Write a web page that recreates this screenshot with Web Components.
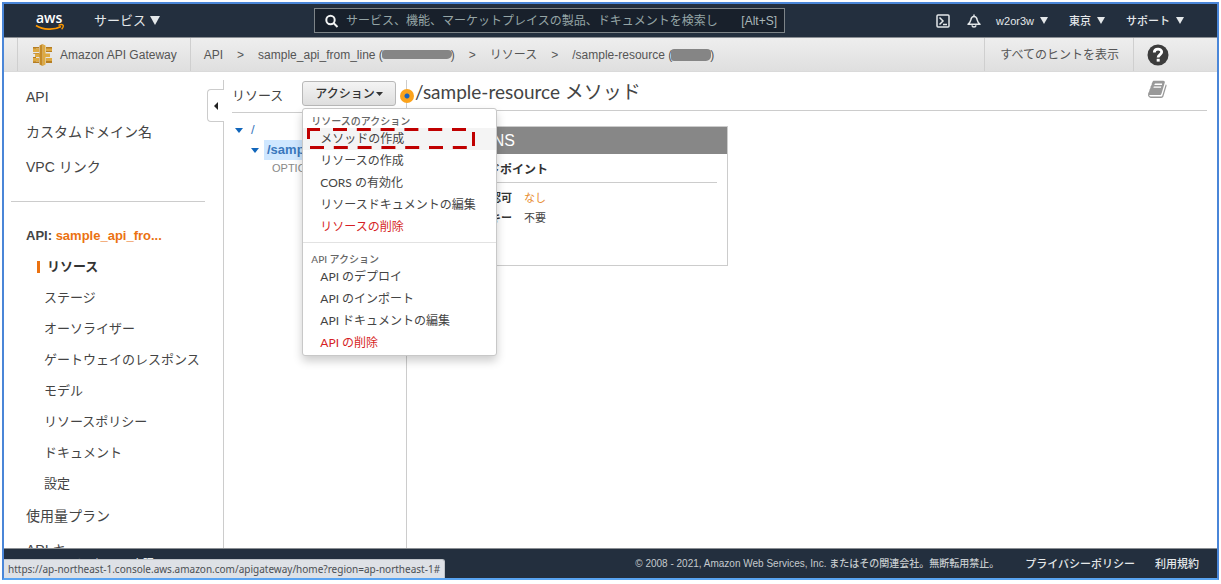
<!DOCTYPE html>
<html lang="ja">
<head>
<meta charset="utf-8">
<title>API Gateway</title>
<style>
html, body { margin: 0; height: 100%; }
body { background: #fff; color: #444; font: 12px/20px "Liberation Sans", "Noto Sans CJK JP", sans-serif; overflow: hidden; }
</style>
</head>
<body>
<console-shell>
  <top-nav slot="top"></top-nav>
  <crumb-bar slot="top"></crumb-bar>
  <side-nav></side-nav>
  <resource-tree><action-menu></action-menu></resource-tree>
  <method-pane><method-card></method-card></method-pane>
  <page-footer slot="bottom"></page-footer>
  <link-status slot="bottom">https://ap-northeast-1.console.aws.amazon.com/apigateway/home?region=ap-northeast-1#</link-status>
</console-shell>

<script>
function define(name, html) {
  const t = document.createElement('template');
  t.innerHTML = '<style>*{box-sizing:border-box}a{color:inherit;text-decoration:none}ul,dl,dd,h1,h2,h3,p{margin:0;padding:0;list-style:none}button{font:inherit;color:inherit;background:none;border:0;padding:0;cursor:pointer}</style>' + html;
  customElements.define(name, class extends HTMLElement {
    constructor() {
      super();
      this.attachShadow({ mode: 'open' }).appendChild(t.content.cloneNode(true));
    }
  });
}

define('console-shell', `
<style>
:host { display: block; height: 100vh; padding: 2px 2px 4px; box-sizing: border-box; }
.frame { position: relative; display: flex; flex-direction: column; height: 100%; border: 2px solid #4a86d8; border-bottom-color: #58a4f2; }
.body { flex: 1; min-height: 0; display: grid; grid-template-columns: 220px 183px minmax(0, 1fr); }
</style>
<div class="frame"><slot name="top"></slot><main class="body"><slot></slot></main><slot name="bottom"></slot></div>`);

define('top-nav', `
<style>
:host { display: block; }
header { display: grid; grid-template-columns: 310px minmax(0, 471px) 1fr; align-items: center; height: 34px; background: #232f3e; border-bottom: 1px solid #8b8f94; color: #e4e8ea; }
.left, .right { display: flex; align-items: center; }
.left { padding-left: 31px; gap: 29px; font-size: 13px; }
.left a, .right a { display: flex; }
.logo { overflow: visible; }
button { display: flex; align-items: center; gap: 4px; }
.right { justify-content: flex-end; padding-right: 33px; font-size: 11px; font-weight: 500; }
.right button { margin-left: 21px; gap: 6px; }
.right .icon { margin-left: 16px; }
.right .name { margin-left: 14px; }
label { display: flex; align-items: center; height: 25px; padding: 0 7px 0 10px; background: #18202b; border: 1px solid #7d8488; gap: 7px; color: #aab7b8; }
input { flex: 1; min-width: 0; height: 20px; padding: 0; border: 0; background: none; outline: 0; font: inherit; color: inherit; }
input::placeholder { color: #95a5a6; opacity: 1; }
</style>
<header>
  <div class="left">
    <a href="#" aria-label="aws"><svg class="logo" width="30" height="20" viewBox="0 0 30 20"><text x="1" y="12" font-family="Open Sans" font-weight="600" font-size="14" fill="#fff">aws</text><path d="M1 14.500C8 19 19 19.500 26 15.500" fill="none" stroke="#f90" stroke-width="1.700"/><path d="M23.500 14.300c2-.9 4-.8 4.600-.2.4.7-.2 2.700-1.500 4.200" fill="none" stroke="#f90" stroke-width="1.300"/></svg></a>
    <button>サービス <svg width="10" height="9"><path d="M0 0h10L5 9z" fill="#e4e8ea"/></svg></button>
  </div>
  <label><svg width="14" height="14" viewBox="0 0 14 14" fill="none" stroke="#f2f3f3" stroke-width="2"><circle cx="5.500" cy="6" r="4.200"/><path d="M8.500 9l4 4"/></svg>
    <input type="search" aria-label="検索" placeholder="サービス、機能、マーケットプレイスの製品、ドキュメントを検索し"><span>[Alt+S]</span></label>
  <div class="right">
    <button class="icon" aria-label="CloudShell"><svg width="14" height="14" viewBox="0 0 14 14" fill="none" stroke="#e4e8ea" stroke-width="1.500"><rect x="1" y="1" width="12" height="12" rx="1"/><path d="M3.500 3.500L7 7l-3.500 3.500M7 10.500h4"/></svg></button>
    <button class="icon" aria-label="通知"><svg width="16" height="14" viewBox="0 0 16 14" fill="none" stroke="#e4e8ea" stroke-width="1.500"><path d="M8 .5v2M2 10.300C4.500 8.300 4.500 7 4.900 5.500 5.300 3.500 6.500 2.500 8 2.500s2.700 1 3.100 3C11.500 7 11.500 8.300 14 10.300z" stroke-linejoin="round"/><path d="M6 11.300c.3 2.300 3.700 2.300 4 0"/></svg></button>
    <button class="name">w2or3w <svg width="8" height="7"><path d="M0 0h8L4 7z" fill="#e4e8ea"/></svg></button>
    <button>東京 <svg width="8" height="7"><path d="M0 0h8L4 7z" fill="#e4e8ea"/></svg></button>
    <button>サポート <svg width="8" height="7"><path d="M0 0h8L4 7z" fill="#e4e8ea"/></svg></button>
  </div>
</header>`);

define('crumb-bar', `
<style>
:host { display: block; }
nav { display: flex; height: 34px; padding-left: 13px; line-height: 34px; background: linear-gradient(#eee, #dfdfdf); border-bottom: 1px solid #dadada; color: #555; font-size: 12px; white-space: nowrap; }
.home { display: flex; align-items: center; gap: 7px; padding: 0 13px 0 14px; border: solid #cfcfcf; border-width: 0 1px; }
.path { flex: 1; display: flex; gap: 14px; padding-left: 13px; }
.path a { display: flex; align-items: center; }
.mask { width: 70px; height: 9px; margin: 0 -1px; background: #858585; border-radius: 3px 4px 5px 3px; }
.mask.short { width: 40px; height: 12px; }
.hint { padding: 0 14px 0 15px; border: solid #cfcfcf; border-width: 0 1px; }
.help { display: flex; align-items: center; padding: 0 48px 0 13px; }
</style>
<nav>
  <a class="home" href="#"><svg width="21" height="22" viewBox="0 0 21 22"><path d="M1 3h6v1.500H4V8H1zM1 8v1.500L4 10v3H1v6h6v-1.500H4V13h3V9H1zM20 3h-6v5h6zM20 14h-6v5h6z" fill="#b57d22"/><path d="M1 4.500h6V8H1zM3 9.500h5V13H3zM1 14h6v3.500H1zM14 4.500h6V7h-6zM13 9.500h5V13h-5zM14 14h6v3h-6zM10.500 0l3 1.500v19l-3 1.500z" fill="#deaa42"/><path d="M7.500 1.500l3-1.500v22l-3-1.500z" fill="#c48a26"/></svg><span>Amazon API Gateway</span></a>
  <div class="path"><a href="#">API</a><span>&gt;</span><a href="#">sample_api_from_line (<i class="mask"></i>)</a><span>&gt;</span><a href="#">リソース</a><span>&gt;</span><a href="#">/sample-resource (<i class="mask short"></i>)</a></div>
  <a class="hint" href="#">すべてのヒントを表示</a>
  <a class="help" href="#" aria-label="ヘルプ"><svg width="22" height="22" viewBox="0 0 22 22"><circle cx="11" cy="11" r="10.500" fill="#3c3c3c"/><path d="M7.300 8.500c0-4.300 7.400-4.300 7.400-.4 0 2.500-3.600 2.600-3.600 5.400" fill="none" stroke="#fff" stroke-width="2.800"/><rect x="9.700" y="14.800" width="3" height="2.800" fill="#fff"/></svg></a>
</nav>`);

define('side-nav', `
<style>
:host { display: block; position: relative; min-height: 0; padding-top: 8px; }
nav { height: 100%; overflow: hidden; border-right: 1px solid #ccc; font-size: 14px; color: #444; white-space: nowrap; }
a { display: block; padding-left: 22px; line-height: 34px; }
.top { padding-bottom: 16px; margin: 0 18px 19px 7px; border-bottom: 1px solid #ccc; }
.top a { padding-left: 15px; line-height: 35px; }
h2 { padding-left: 22px; font-size: 13px; line-height: 30px; }
h2 a { display: inline; padding: 0; line-height: 30px; color: #eb7211; }
.sub a { padding-left: 40px; font-size: 13px; line-height: 31px; }
.sub .on { display: flex; align-items: center; gap: 7px; padding-left: 33px; font-weight: 700; color: #333; }
.on::before { content: ""; width: 3px; height: 12px; background: #eb7211; }
button { position: absolute; top: 17px; right: 0; width: 17px; height: 33px; border: 1px solid #ccc; border-right: 0; border-radius: 4px 0 0 4px; background: #fff; }
</style>
<nav>
  <ul class="top"><li><a href="#">API</a></li><li><a href="#">カスタムドメイン名</a></li><li><a href="#">VPC リンク</a></li></ul>
  <h2>API: <a href="#">sample_api_fro...</a></h2>
  <ul class="sub"><li><a class="on" href="#">リソース</a></li><li><a href="#">ステージ</a></li><li><a href="#">オーソライザー</a></li><li><a href="#">ゲートウェイのレスポンス</a></li><li><a href="#">モデル</a></li><li><a href="#">リソースポリシー</a></li><li><a href="#">ドキュメント</a></li><li><a href="#">設定</a></li></ul>
  <ul><li><a href="#">使用量プラン</a></li><li><a href="#">API キー</a></li></ul>
</nav>
<button aria-label="閉じる"><svg width="4" height="8"><path d="M4 0v8L0 4z" fill="#222"/></svg></button>`);

define('resource-tree', `
<style>
:host { display: block; min-height: 0; padding-top: 8px; }
section { position: relative; height: 100%; border-right: 1px solid #ccc; }
header { display: flex; align-items: center; gap: 17px; height: 33px; margin-left: 8px; padding-bottom: 7px; border-bottom: 1px solid #ccc; }
h2 { font-size: 13px; font-weight: 400; line-height: 20px; padding: 7px 2px 0 0; white-space: nowrap; }
ul { line-height: 20px; color: #3a78bd; font-size: 13px; }
.tree { padding: 7px 0 0 11px; }
.tree ul { padding-left: 16px; }
.row { display: flex; align-items: center; }
.row svg { margin-right: 5px; }
.row a { padding: 0 3px; }
.row .sel { flex: 1; overflow: hidden; background: #cfe7ff; font-weight: 700; }
.verb { display: block; padding-left: 21px; line-height: 17px; font-size: 11px; color: #888; }
.dot { position: absolute; right: -8px; top: 9px; width: 14px; height: 14px; border-radius: 50%; background: radial-gradient(circle, #1a65c0 0 2px, #fba31c 3px); }
</style>
<section>
  <header><h2>リソース</h2><slot></slot></header>
  <ul class="tree"><li><div class="row"><svg width="8" height="5"><path d="M0 0h8L4 5z" fill="#1166bb"/></svg><a href="#">/</a></div>
    <ul><li><div class="row"><svg width="8" height="5"><path d="M0 0h8L4 5z" fill="#1166bb"/></svg><a class="sel" href="#">/sample-resource</a></div>
      <a class="verb" href="#">OPTIONS</a></li></ul></li></ul>
  <span class="dot"></span>
</section>`);

define('action-menu', `
<style>
:host { display: block; position: relative; z-index: 2; font-family: Lato, "Noto Sans CJK JP", sans-serif; }
.open { display: flex; align-items: center; gap: 1px; height: 25px; margin-top: 2px; padding: 0 12px; border: 1px solid #b8b8b8; border-radius: 3px; background: linear-gradient(#f4f4f4, #dedede); color: #333; font-size: 12px; font-weight: 500; white-space: nowrap; }
.menu { position: absolute; left: 0; top: 29px; width: 195px; padding: 5px 0 1px; background: #fff; border: 1px solid #c8c8c8; border-radius: 3px; box-shadow: 0 5px 10px rgba(0,0,0,.2); }
h3 { padding-left: 8px; font-size: 10px; line-height: 14px; font-weight: 500; color: #666; }
.menu a { display: block; padding-left: 17px; font-size: 12px; line-height: 22px; color: #444; white-space: nowrap; }
.menu .hover { background: #f4f4f4; }
.menu .danger { color: #d61f26; }
ul + h3 { margin-top: 4px; padding-top: 9px; border-top: 1px solid #e2e2e2; }
.mark { position: absolute; left: 4px; top: 19px; pointer-events: none; }
</style>
<button class="open" aria-expanded="true">アクション<svg width="7" height="4"><path d="M0 0h7L3.500 4z" fill="#333"/></svg></button>
<div class="menu">
  <h3>リソースのアクション</h3>
  <ul><li><a class="hover" href="#">メソッドの作成</a></li><li><a href="#">リソースの作成</a></li><li><a href="#">CORS の有効化</a></li><li><a href="#">リソースドキュメントの編集</a></li><li><a class="danger" href="#">リソースの削除</a></li></ul>
  <h3>API アクション</h3>
  <ul><li><a href="#">API のデプロイ</a></li><li><a href="#">API のインポート</a></li><li><a href="#">API ドキュメントの編集</a></li><li><a class="danger" href="#">API の削除</a></li></ul>
  <svg class="mark" width="168" height="22" fill="none" stroke="#c00000" stroke-width="3"><path d="M1.500 11V1.500H13"/><path d="M26 1.500H160M3 19.500H160" stroke-dasharray="14 9.800"/><path d="M166.500 4v14"/></svg>
</div>`);

define('method-pane', `
<style>
:host { display: block; min-width: 0; padding: 8px 10px 0 8px; font-family: Lato, "Noto Sans CJK JP", sans-serif; }
header { display: flex; justify-content: space-between; align-items: flex-start; height: 31px; padding-right: 40px; border-bottom: 1px solid #ccc; }
h1 { font-size: 19px; line-height: 24px; font-weight: 400; color: #444; }
.body { padding: 15px 0 0 12px; }
</style>
<header><h1>/sample-resource メソッド</h1><button aria-label="ドキュメント"><svg width="19" height="19" viewBox="0 64 1700 1700"><path fill="#999" d="M1639 478q40 57 18 129l-275 906q-19 64-76.500 107.500t-122.500 43.500h-923q-77 0-148.500-53.500t-99.500-131.500q-24-67-2-127 0-4 3-27t4-37q1-8-3-21.500t-3-19.500q2-11 8-21t16.500-23.500 16.500-23.500q23-38 45-91.500t30-91.500q3-10 .5-30t-.5-28q3-11 17-28t17-23q21-36 42-92t25-90q1-9-2.500-32t.5-28q4-13 22-30.500t22-22.500q19-26 42.500-84.500t27.500-96.500q1-8-3-25.500t-2-26.500q2-8 9-18t18-23 17-21q8-12 16.500-30.500t15-35 16-36 19.500-32 26.500-23.500 36-11.500 47.500 5.500l-1 3q38-9 51-9h761q74 0 114 56t18 130l-274 906q-36 119-71.500 153.500t-128.500 34.500h-869q-27 0-38 15-11 16-1 43 24 70 144 70h923q29 0 56-15.500t35-41.500l300-987q7-22 5-57 38 15 59 43zm-1064 2q-4 13 2 22.500t20 9.500h608q13 0 25.500-9.500t16.500-22.500l21-64q4-13-2-22.500t-20-9.500h-608q-13 0-25.500 9.500t-16.500 22.500zm-83 256q-4 13 2 22.500t20 9.500h608q13 0 25.500-9.500t16.500-22.500l21-64q4-13-2-22.500t-20-9.500h-608q-13 0-25.500 9.500t-16.500 22.500z"/></svg></button></header>
<div class="body"><slot></slot></div>`);

define('method-card', `
<style>
:host { display: block; width: 301px; height: 140px; box-sizing: border-box; border: 1px solid #ccc; font-family: "Liberation Sans", "Noto Sans CJK JP", sans-serif; background: #fff; }
h2 { padding-left: 15px; font-size: 16px; font-weight: 400; line-height: 27px; color: #fff; background: #878787; }
h3 { margin: 0 10px 0 2px; padding-top: 4px; height: 29px; font-size: 12px; line-height: 24px; border-bottom: 1px solid #ccc; color: #333; white-space: nowrap; }
dl { display: grid; grid-template-columns: 84px 1fr; column-gap: 12px; padding-top: 5px; font-size: 11px; line-height: 20px; }
dt { text-align: right; font-weight: 700; color: #333; }
dd a { color: #e88b2d; }
</style>
<h2>OPTIONS</h2>
<h3>Mock エンドポイント</h3>
<dl><dt>認可</dt><dd><a href="#">なし</a></dd><dt>API キー</dt><dd>不要</dd></dl>`);

define('page-footer', `
<style>
:host { display: block; }
footer { display: flex; align-items: center; height: 30px; padding: 0 18px 0 22px; background: #232f3e; color: #e4e8ea; font-size: 11px; font-weight: 500; border-top: 1px solid #8b8f94; white-space: nowrap; }
button { margin-right: 18px; }
p { margin-left: auto; font-size: 10px; color: #c5cacd; }
a { margin-left: 20px; }
p + a { margin-left: 26px; }
</style>
<footer><button>フィードバック</button><button>日本語</button><p>© 2008 - 2021, Amazon Web Services, Inc. またはその関連会社。無断転用禁止。</p><a href="#">プライバシーポリシー</a><a href="#">利用規約</a></footer>`);

define('link-status', `
<style>
:host { position: absolute; left: 0; bottom: 0; padding: 0 4px; box-sizing: border-box; background: #dee1e6; border: solid #bfc3c8; border-width: 1px 1px 0 0; border-radius: 0 3px 0 0; color: #4b4f54; font: 10px/18px "Noto Sans", sans-serif; white-space: nowrap; }
</style><slot></slot>`);
</script>
</body>
</html>
